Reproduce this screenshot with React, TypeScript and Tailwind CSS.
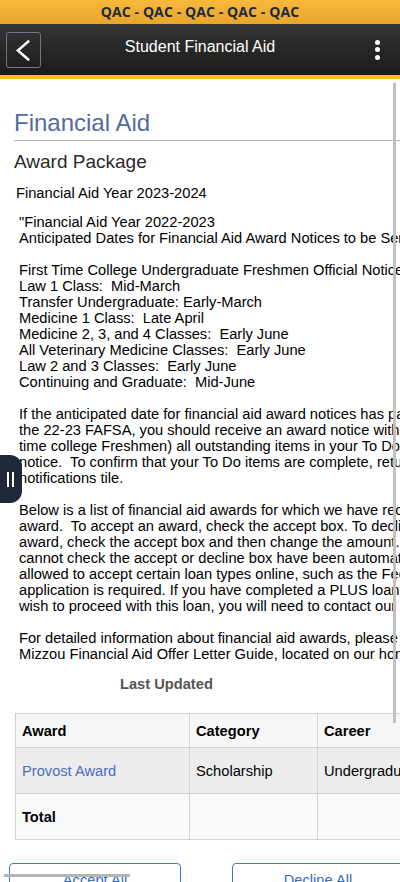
import React from "react";

const bodyLines = [
  '"Financial Aid Year 2022-2023',
  "Anticipated Dates for Financial Aid Award Notices to be Sent",
  "",
  "First Time College Undergraduate Freshmen Official Notices:  Mid-February",
  "Law 1 Class:  Mid-March",
  "Transfer Undergraduate: Early-March",
  "Medicine 1 Class:  Late April",
  "Medicine 2, 3, and 4 Classes:  Early June",
  "All Veterinary Medicine Classes:  Early June",
  "Law 2 and 3 Classes:  Early June",
  "Continuing and Graduate:  Mid-June",
  "",
  "If the anticipated date for financial aid award notices has passed and you have filed",
  "the 22-23 FAFSA, you should receive an award notice within two weeks once (for first",
  "time college Freshmen) all outstanding items in your To Do List are complete to receive a",
  "notice.  To confirm that your To Do items are complete, return to the homepage and the",
  "notifications tile.",
  "",
  "Below is a list of financial aid awards for which we have received your acceptance. Review each",
  "award.  To accept an award, check the accept box. To decline the award, check the decline box. To reduce an",
  "award, check the accept box and then change the amount.  Awards for which you",
  "cannot check the accept or decline box have been automatically accepted. You are not",
  "allowed to accept certain loan types online, such as the Federal PLUS loan, for which an",
  "application is required. If you have completed a PLUS loan application and",
  "wish to proceed with this loan, you will need to contact our office.",
  "",
  "For detailed information about financial aid awards, please review the",
  "Mizzou Financial Aid Offer Letter Guide, located on our homepage.\"",
];

export default function App() {
  return (
    <div className="relative w-[400px] h-[882px] overflow-hidden bg-white font-['Liberation_Sans',Arial,sans-serif] text-black">
      {/* QAC banner */}
      <div className="h-[24px] bg-gradient-to-b from-[#f7b93c] to-[#e9a62c] flex items-center justify-center">
        <span className="font-['Open_Sans',sans-serif] font-bold text-[14px] text-[#1c2a40] leading-none tracking-[0.1px]">
          QAC - QAC - QAC - QAC - QAC
        </span>
      </div>
      {/* Header */}
      <div className="relative h-[51px] bg-gradient-to-b from-[#353535] to-[#1a1a1a] flex items-center">
        <div className="ml-[6px] mt-[1px] w-[35px] h-[36px] border border-[#6f7786] rounded-[3px] flex items-center justify-center">
          <svg width="35" height="36" viewBox="0 0 35 36">
            <polyline points="22.5,9 11.5,18.5 22.5,28" fill="none" stroke="white" strokeWidth="2.6" strokeLinecap="square" strokeLinejoin="miter" />
          </svg>
        </div>
        <div className="flex-1 text-center text-white text-[16px] leading-none -mt-[6px] pl-[4px]">
          Student Financial Aid
        </div>
        <div className="w-[45px] flex flex-col items-center gap-[2.5px] pr-[1px]">
          <span className="block w-[5px] h-[5px] rounded-full bg-white" />
          <span className="block w-[5px] h-[5px] rounded-full bg-white" />
          <span className="block w-[5px] h-[5px] rounded-full bg-white" />
        </div>
      </div>
      <div className="h-[4px] bg-[#fbb829]" />

      {/* Content */}
      <div className="w-[600px] pl-[14px]">
        <div className="mt-[30px] border-b border-[#b3b3b3] pb-[3px]">
          <h1 className="text-[24px] leading-[28px] text-[#526c9e]">Financial Aid</h1>
        </div>
        <h2 className="mt-[10px] text-[19px] leading-[22px] text-[#2a2a2a]">Award Package</h2>
        <div className="mt-[12px] pl-[2px] text-[14.67px] leading-[16px]">Financial Aid Year 2023-2024</div>
        <div className="mt-[13px] pl-[5px] text-[14.67px] leading-[16px] whitespace-pre">
          {bodyLines.map((l, i) => (
            <div key={i} className="h-[16px]">{l}</div>
          ))}
        </div>
        <div className="mt-[14px] pl-[106px] text-[14.67px] leading-[16px] font-bold text-[#555555]">Last Updated</div>

        <table className="mt-[21px] ml-[1px] border-collapse text-[14.67px] leading-[16px]">
          <tbody>
            <tr className="h-[34px] bg-[#f7f7f8]">
              <td className="w-[174px] border border-[#d0d2d6] px-[6px] font-bold">Award</td>
              <td className="w-[128px] border border-[#d0d2d6] px-[6px] font-bold">Category</td>
              <td className="w-[170px] border border-[#d0d2d6] px-[6px] font-bold">Career</td>
            </tr>
            <tr className="h-[46px] bg-[#ededee]">
              <td className="border border-[#d0d2d6] px-[6px] text-[#4a6cc2]">Provost Award</td>
              <td className="border border-[#d0d2d6] px-[6px]">Scholarship</td>
              <td className="border border-[#d0d2d6] px-[6px]">Undergraduate</td>
            </tr>
            <tr className="h-[46px] bg-[#fafafa]">
              <td className="border border-[#d0d2d6] px-[6px] font-bold">Total</td>
              <td className="border border-[#d0d2d6] px-[6px]"></td>
              <td className="border border-[#d0d2d6] px-[6px]"></td>
            </tr>
          </tbody>
        </table>

        <div className="mt-[23px] -ml-[5px] flex gap-[51px]">
          <button className="w-[172px] h-[36px] border border-[#3b78d4] rounded-[4px] text-[14.67px] text-[#3a68c4] pb-[2px]">
            Accept All
          </button>
          <button className="w-[172px] h-[36px] border border-[#3b78d4] rounded-[4px] text-[14.67px] text-[#3a68c4] pb-[2px]">
            Decline All
          </button>
        </div>
      </div>

      {/* vertical scrollbar */}
      <div className="absolute left-[393px] top-[83px] w-[3px] h-[640px] bg-[#c1c1c1]" />
      {/* horizontal scrollbar */}
      <div className="absolute left-[4px] top-[874px] w-[126px] h-[3px] bg-[#b5b5b5]" />
      {/* left handle */}
      <div className="absolute left-0 top-[455px] w-[22px] h-[48px] bg-[#1f2838] rounded-r-[12px] flex items-center justify-center gap-[3px] pr-[2px]">
        <span className="block w-[2px] h-[15px] bg-white" />
        <span className="block w-[2px] h-[15px] bg-white" />
      </div>
    </div>
  );
}
